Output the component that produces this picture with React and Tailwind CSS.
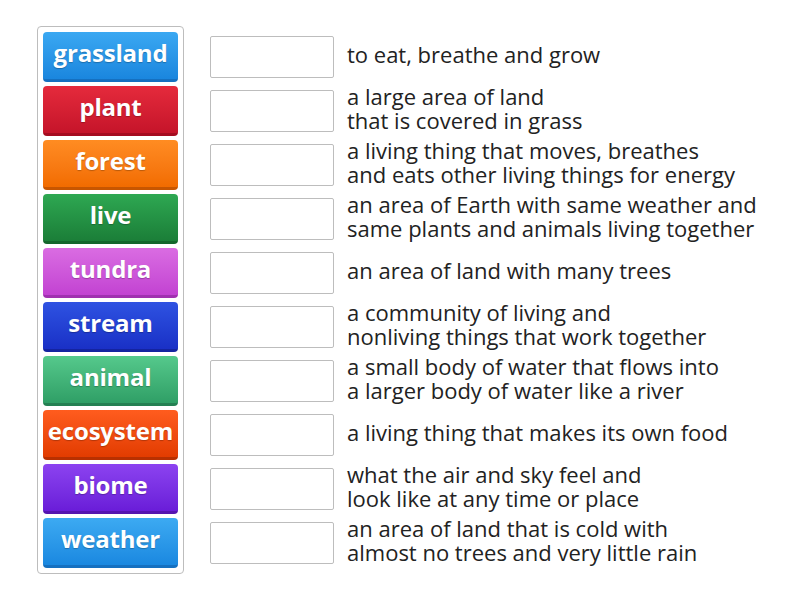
import React from "react";

const tiles = [
  { t: "grassland", c: "bg-gradient-to-b from-[#3aa8f2] to-[#1a86de] border-[#1570c0]" },
  { t: "plant", c: "bg-gradient-to-b from-[#e52a3c] to-[#c5142a] border-[#a50c20]" },
  { t: "forest", c: "bg-gradient-to-b from-[#ff8c22] to-[#f26c00] border-[#c85600]" },
  { t: "live", c: "bg-gradient-to-b from-[#2ea852] to-[#1b7e38] border-[#14662c]" },
  { t: "tundra", c: "bg-gradient-to-b from-[#da6ce2] to-[#c242d2] border-[#a030b0]" },
  { t: "stream", c: "bg-gradient-to-b from-[#2f52e2] to-[#1a30c6] border-[#1424a0]" },
  { t: "animal", c: "bg-gradient-to-b from-[#55c98c] to-[#2f9f66] border-[#248052]" },
  { t: "ecosystem", c: "bg-gradient-to-b from-[#ff5c1e] to-[#e23c00] border-[#b83000]" },
  { t: "biome", c: "bg-gradient-to-b from-[#8c42f0] to-[#6a1cd8] border-[#5514b0]" },
  { t: "weather", c: "bg-gradient-to-b from-[#3caaf2] to-[#1a88e0] border-[#1570c0]" },
];

const defs = [
  ["to eat, breathe and grow"],
  ["a large area of land", "that is covered in grass"],
  ["a living thing that moves, breathes", "and eats other living things for energy"],
  ["an area of Earth with same weather and", "same plants and animals living together"],
  ["an area of land with many trees"],
  ["a community of living and", "nonliving things that work together"],
  ["a small body of water that flows into", "a larger body of water like a river"],
  ["a living thing that makes its own food"],
  ["what the air and sky feel and", "look like at any time or place"],
  ["an area of land that is cold with", "almost no trees and very little rain"],
];

export default function App() {
  return (
    <div
      className="w-[800px] h-[600px] bg-white flex items-start pl-[37px] pt-[26px]"
      style={{ fontFamily: '"Open Sans", "Noto Sans", sans-serif' }}
    >
      <div className="w-[147px] border border-[#bdbdbd] rounded-[4px] p-[5px] flex flex-col gap-[4px]">
        {tiles.map((x) => (
          <div
            key={x.t}
            className={`h-[50px] rounded-[4px] border-b-[3px] flex items-center justify-center text-white font-bold text-[24px] leading-none tracking-[-0.2px] ${x.c}`}
            style={{ textShadow: "0 1px 1px rgba(0,0,0,0.25)" }}
          >
            <span className="-mt-[5px]">{x.t}</span>
          </div>
        ))}
      </div>
      <div className="ml-[26px] pt-[6px] flex flex-col gap-[4px]">
        {defs.map((d, i) => (
          <div key={i} className="h-[50px] flex items-center">
            <div className="w-[124px] h-[42px] border border-[#bdbdbd] rounded-[2px] bg-white shrink-0" />
            <div className="ml-[13px] -mt-[7px] text-[22px] leading-[24px] text-[#222] whitespace-nowrap">
              {d.map((l, j) => (
                <div key={j}>{l}</div>
              ))}
            </div>
          </div>
        ))}
      </div>
    </div>
  );
}
